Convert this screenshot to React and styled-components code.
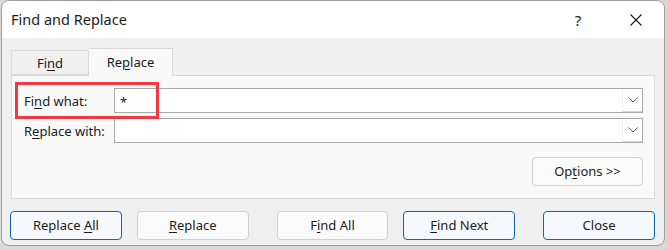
import React from "react";
import styled, { createGlobalStyle } from "styled-components";

const Global = createGlobalStyle`
  html, body { margin: 0; padding: 0; }
  body {
    background: #d9d9d9;
    font-family: "Segoe UI", "Noto Sans", "Open Sans", sans-serif;
    width: 667px;
    height: 250px;
    overflow: hidden;
  }
  u { text-underline-offset: 2px; text-decoration-thickness: 1px; }
`;

const Window = styled.div`
  margin-left: 1px;
  width: 664px;
  height: 246px;
  border: 1px solid #9d9d9d;
  border-radius: 8px;
  background: #f0f0f0;
  overflow: hidden;
  display: flex;
  flex-direction: column;
  box-sizing: border-box;
`;

const TitleBar = styled.div`
  height: 37px;
  flex: none;
  background: #ffffff;
  display: flex;
  align-items: center;
  padding-left: 9px;
`;

const Title = styled.div`
  flex: 1;
  font-size: 14.5px;
  color: #1b1b1b;
  padding-bottom: 2px;
`;

const TitleButton = styled.div`
  width: ${(p) => p.$w}px;
  height: 37px;
  display: flex;
  align-items: center;
  justify-content: center;
  color: #1b1b1b;
  font-size: 15px;
`;

const Body = styled.div`
  flex: 1;
  padding: 9px 9px 0 9px;
  display: flex;
  flex-direction: column;
`;

const TabRow = styled.div`
  display: flex;
  align-items: flex-end;
  height: 28px;
`;

const Tab = styled.div`
  box-sizing: border-box;
  width: ${(p) => p.$w}px;
  height: ${(p) => (p.$active ? 28 : 25)}px;
  background: ${(p) => (p.$active ? "#f9f9f9" : "#f0f0f0")};
  border: 1px solid #dadada;
  border-bottom: ${(p) => (p.$active ? "none" : "1px solid #dadada")};
  ${(p) => (p.$active ? "border-left: none;" : "")}
  display: flex;
  align-items: center;
  justify-content: center;
  font-size: 13px;
  color: #1b1b1b;
  margin-bottom: ${(p) => (p.$active ? -1 : 0)}px;
  position: relative;
  z-index: ${(p) => (p.$active ? 1 : 0)};
  padding-bottom: ${(p) => (p.$active ? 2 : 0)}px;
`;

const Panel = styled.div`
  position: relative;
  box-sizing: border-box;
  height: 124px;
  background: #f9f9f9;
  border: 1px solid #dadada;
  padding: 12px 11px 0 12px;
  display: flex;
  flex-direction: column;
`;

const FieldRow = styled.div`
  display: flex;
  align-items: center;
  height: 25px;
  margin-bottom: 5px;
`;

const Label = styled.div`
  width: 90px;
  font-size: 13px;
  color: #1b1b1b;
`;

const Combo = styled.div`
  flex: 1;
  height: 25px;
  box-sizing: border-box;
  border: 1px solid #a9a9a9;
  background: #ffffff;
  display: flex;
  align-items: center;
`;

const ComboText = styled.div`
  flex: 1;
  padding-left: 5px;
  font-size: 13px;
  color: #1b1b1b;
  padding-top: 3px;
`;

const ComboButton = styled.div`
  width: 20px;
  height: 23px;
  box-sizing: border-box;
  border-left: 1px solid #f0f0f0;
  border-bottom: 1px solid #d6d6d6;
  display: flex;
  align-items: center;
  justify-content: center;
`;

const OptionsRow = styled.div`
  display: flex;
  justify-content: flex-end;
  margin-top: 9px;
`;

const Button = styled.div`
  box-sizing: border-box;
  width: ${(p) => p.$w || 112}px;
  height: ${(p) => p.$h || 29}px;
  margin-left: ${(p) => p.$ml || 0}px;
  border-radius: 4px;
  border: 1px solid ${(p) => (p.$primary ? "#0a66b8" : "#d0d0d0")};
  background: ${(p) => (p.$primary ? "#f5f8fc" : "#fbfbfb")};
  display: flex;
  align-items: center;
  justify-content: center;
  font-size: 13px;
  color: #1b1b1b;
  padding-bottom: 1px;
`;

const ButtonLabel = styled.span`
  white-space: pre;
`;

const ButtonRow = styled.div`
  display: flex;
  margin-top: 12px;
  margin-left: -1px;
`;

const Highlight = styled.div`
  position: absolute;
  left: 3px;
  top: 6px;
  width: 144px;
  height: 37px;
  box-sizing: border-box;
  border: 3px solid #ee3a40;
  pointer-events: none;
`;

const Chevron = () => (
  <svg width="10" height="6" viewBox="0 0 10 6">
    <path d="M0.5 0.5 L5 5 L9.5 0.5" fill="none" stroke="#5f5f5f" strokeWidth="1" />
  </svg>
);

const CloseIcon = () => (
  <svg width="12" height="12" viewBox="0 0 12 12">
    <path d="M0.5 0.5 L11.5 11.5 M11.5 0.5 L0.5 11.5" stroke="#1b1b1b" strokeWidth="1.1" />
  </svg>
);

export default function App() {
  return (
    <>
      <Global />
      <Window>
        <TitleBar>
          <Title>Find and Replace</Title>
          <TitleButton $w={30}>?</TitleButton>
          <TitleButton $w={30} style={{ marginLeft: 28, marginRight: 13 }}>
            <CloseIcon />
          </TitleButton>
        </TitleBar>
        <Body>
          <TabRow>
            <Tab $w={78}>
              <ButtonLabel>Fi<u>n</u>d</ButtonLabel>
            </Tab>
            <Tab $w={84} $active>
              <ButtonLabel>Re<u>p</u>lace</ButtonLabel>
            </Tab>
          </TabRow>
          <Panel>
            <FieldRow>
              <Label>
                Fi<u>n</u>d what:
              </Label>
              <Combo>
                <ComboText>*</ComboText>
                <ComboButton>
                  <Chevron />
                </ComboButton>
              </Combo>
            </FieldRow>
            <FieldRow>
              <Label>
                R<u>e</u>place with:
              </Label>
              <Combo>
                <ComboText></ComboText>
                <ComboButton>
                  <Chevron />
                </ComboButton>
              </Combo>
            </FieldRow>
            <OptionsRow>
              <Button $w={111}>
                <ButtonLabel>Op<u>t</u>ions &gt;&gt;</ButtonLabel>
              </Button>
            </OptionsRow>
            <Highlight />
          </Panel>
          <ButtonRow>
            <Button $primary>
              <ButtonLabel>Replace <u>A</u>ll</ButtonLabel>
            </Button>
            <Button $ml={15}>
              <ButtonLabel><u>R</u>eplace</ButtonLabel>
            </Button>
            <Button $ml={28}>
              <ButtonLabel>F<u>i</u>nd All</ButtonLabel>
            </Button>
            <Button $primary $ml={15}>
              <ButtonLabel><u>F</u>ind Next</ButtonLabel>
            </Button>
            <Button $primary $ml={28}>
              <ButtonLabel>Close</ButtonLabel>
            </Button>
          </ButtonRow>
        </Body>
      </Window>
    </>
  );
}
